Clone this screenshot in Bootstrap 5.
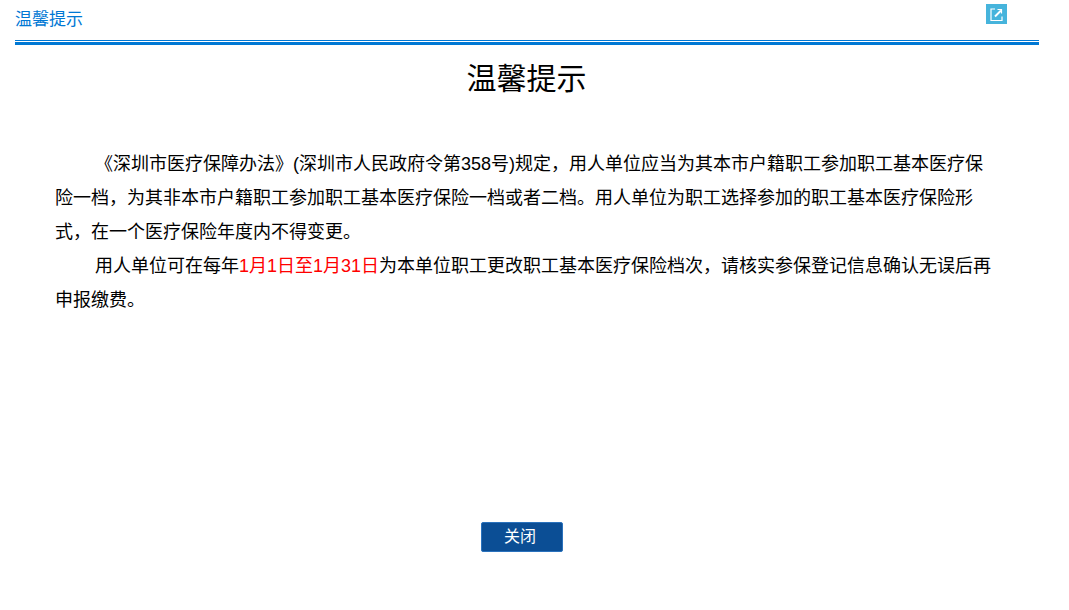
<!DOCTYPE html>
<html lang="zh">
<head>
    <meta charset="UTF-8">
    <meta name="viewport" content="width=device-width, initial-scale=1">
    <title>温馨提示</title>
    <link href="https://cdn.jsdelivr.net/npm/bootstrap@5.3.0/dist/css/bootstrap.min.css" rel="stylesheet">
    <style>
        body {
            background-color: #ffffff;
            color: #000000;
            font-family: "Liberation Sans", "Noto Sans CJK SC", sans-serif;
            overflow: hidden;
        }
        .page-box {
            width: 1024px;
            margin-left: 15px;
        }
        .top-bar {
            height: 41px;
            border-bottom: 1px solid #0078d4;
        }
        .top-rule {
            height: 3px;
            margin-top: 1px;
            background-color: #0078d4;
        }
        .top-title {
            color: #0078d4;
            font-size: 17px;
            line-height: 39px;
        }
        .open-btn {
            width: 21px;
            height: 20px;
            margin-top: 4px;
            margin-right: 32px;
            background-color: #46b4dc;
        }
        .notice-title {
            font-size: 30px;
            font-weight: 400;
            line-height: 34px;
            margin: 17px 0 0 -1px;
        }
        .notice-body {
            width: 940px;
            margin: 51px 0 0 40px;
            font-size: 18px;
            line-height: 34px;
        }
        .notice-body p {
            margin: 0;
            text-indent: 40px;
        }
        .notice-date {
            color: #ff0000;
        }
        .close-row {
            margin-top: 205px;
        }
        .close-btn {
            width: 82px;
            height: 30px;
            padding: 0 4px 0 0;
            margin-left: -10px;
            font-size: 16px;
            color: #ffffff;
            background-color: #0b4e95;
            border: 1px solid #2a72bd;
            border-radius: 2px;
        }
    </style>
</head>
<body>
    <div class="page-box">
        <div class="top-bar d-flex justify-content-between">
            <span class="top-title">温馨提示</span>
            <a href="#" class="open-btn d-flex align-items-center justify-content-center" aria-label="open">
                <svg width="15" height="15" viewBox="0 0 15 15" fill="none" stroke="#ffffff">
                    <path d="M6 2H2V13.500H13V9.500" stroke-width="1.200"/>
                    <path d="M6 9.500L12 3.500" stroke-width="2"/>
                    <path d="M8.500 2.500H12.500V6.500" stroke-width="1.200"/>
                </svg>
            </a>
        </div>
        <div class="top-rule"></div>

        <h1 class="notice-title text-center">温馨提示</h1>

        <div class="notice-body">
            <p>《深圳市医疗保障办法》(深圳市人民政府令第358号)规定，用人单位应当为其本市户籍职工参加职工基本医疗保险一档，为其非本市户籍职工参加职工基本医疗保险一档或者二档。用人单位为职工选择参加的职工基本医疗保险形式，在一个医疗保险年度内不得变更。</p>
            <p>用人单位可在每年<span class="notice-date">1月1日至1月31日</span>为本单位职工更改职工基本医疗保险档次，请核实参保登记信息确认无误后再申报缴费。</p>
        </div>

        <div class="close-row text-center">
            <button type="button" class="btn close-btn">关闭</button>
        </div>
    </div>

    <script src="https://cdn.jsdelivr.net/npm/bootstrap@5.3.0/dist/js/bootstrap.bundle.min.js"></script>
</body>
</html>
